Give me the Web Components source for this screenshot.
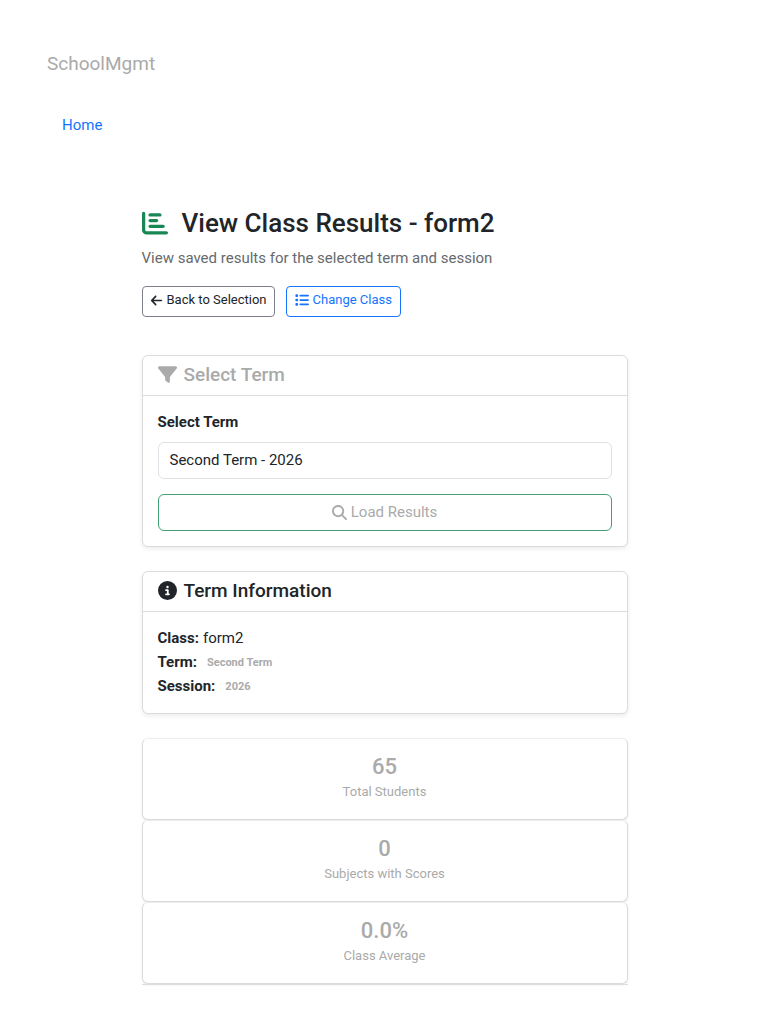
<!DOCTYPE html>
<html lang="en">
<head>
<meta charset="utf-8">
<meta name="viewport" content="width=device-width, initial-scale=1">
<title>View Class Results - form2</title>
<style>
  body { margin: 0; background: #fff; color: #212529; font: 15px/24px Roboto, "Liberation Sans", sans-serif; }
</style>
</head>
<body>
<results-page></results-page>

<template id="t-page">
  <style>
    :host { display: block; padding: 48px 46px 36px 47px; }
    main { display: block; max-width: 486px; margin: 0 auto; padding-top: 69px; }
    .stack { display: grid; gap: 24px; margin-top: 38px; }
    form { display: grid; margin: 0; }
    label { font-weight: 700; margin-bottom: 8px; }
    select { appearance: none; box-sizing: border-box; width: 100%; height: 37px; margin: 0 0 15px; padding: 0 11px 2px; border: 1px solid #dee2e6; border-radius: 6px; background: #fff; color: #212529; font: inherit; }
    .info { margin: 0; }
    .info div { display: flex; gap: 4px; height: 24px; }
    .info div + div { gap: 10px; }
    dt { font-weight: 700; }
    dd { margin: 0; }
    .badge { color: #aaa; font-size: 11px; font-weight: 700; line-height: 26px; }
    .stats::after { content: ""; display: block; border-top: 1px solid #dedede; }
  </style>
  <site-nav></site-nav>
  <main>
    <page-heading></page-heading>
    <div class="stack">
      <ui-card muted>
        <ui-icon slot="icon" name="filter" size="19"></ui-icon>
        <span slot="title">Select Term</span>
        <form>
          <label for="term">Select Term</label>
          <select id="term"><option>Second Term - 2026</option></select>
          <ui-button tone="success" block><ui-icon name="search" size="15"></ui-icon> Load Results</ui-button>
        </form>
      </ui-card>
      <ui-card>
        <ui-icon slot="icon" name="info" size="19"></ui-icon>
        <span slot="title">Term Information</span>
        <dl class="info">
          <div><dt>Class:</dt><dd>form2</dd></div>
          <div><dt>Term:</dt><dd class="badge">Second Term</dd></div>
          <div><dt>Session:</dt><dd class="badge">2026</dd></div>
        </dl>
      </ui-card>
      <div class="stats">
        <stat-card><span slot="value">65</span>Total Students</stat-card>
        <stat-card><span slot="value">0</span>Subjects with Scores</stat-card>
        <stat-card><span slot="value">0.0%</span>Class Average</stat-card>
      </div>
    </div>
  </main>
</template>

<template id="t-nav">
  <style>
    :host { display: block; }
    nav { display: grid; gap: 33px; justify-items: start; }
    a { text-decoration: none; }
    .brand { color: #aaa; font-size: 19px; line-height: 32px; }
    .link { color: #1474ff; margin-left: 15px; line-height: 24px; }
  </style>
  <nav>
    <a class="brand" href="#">SchoolMgmt</a>
    <a class="link" href="#">Home</a>
  </nav>
</template>

<template id="t-heading">
  <style>
    :host { display: block; }
    h1 { display: flex; align-items: center; gap: 14px; margin: 0; font-size: 26px; font-weight: 500; line-height: 34px; white-space: nowrap; }
    h1 ui-icon { color: #198754; }
    p { margin: 6px 0 16px; color: #666a6e; }
    .actions { display: flex; flex-wrap: wrap; gap: 11px; }
  </style>
  <h1><ui-icon name="chart" size="26"></ui-icon>View Class Results - form2</h1>
  <p>View saved results for the selected term and session</p>
  <div class="actions">
    <ui-button tone="dark"><ui-icon name="back" size="13"></ui-icon> Back to Selection</ui-button>
    <ui-button tone="primary"><ui-icon name="list" size="14"></ui-icon> Change Class</ui-button>
  </div>
</template>

<template id="t-button">
  <style>
    :host { display: inline-block; }
    button { display: flex; align-items: center; justify-content: center; gap: 4px; box-sizing: border-box; width: 100%; height: 31px; margin: 0; padding: 0 7px 3px; border: 1px solid #7c8187; border-radius: 4px; background: #fff; color: #212529; font: inherit; font-size: 13px; white-space: nowrap; }
    :host([tone="primary"]) button { border-color: #1474ff; color: #1474ff; padding: 0 8px 3px; }
    :host([block]) { display: block; }
    :host([block]) button { height: 37px; padding-bottom: 1px; border-color: #41a076; border-radius: 6px; color: #aaa; font-size: 15px; }
  </style>
  <button type="button"><slot></slot></button>
</template>

<template id="t-card">
  <style>
    :host { display: block; border: 1px solid #dcdcdc; border-radius: 6px; background: #fff; box-shadow: 0 2px 4px rgba(0,0,0,.08); }
    h2 { display: flex; align-items: center; gap: 7px; box-sizing: border-box; height: 40px; margin: 0; padding: 0 15px 2px; border-bottom: 1px solid #dedede; font-size: 19px; font-weight: 500; line-height: 24px; }
    :host([muted]) h2 { color: #aaa; }
    .body { padding: 14px 15px 15px; }
  </style>
  <h2><slot name="icon"></slot><slot name="title"></slot></h2>
  <div class="body"><slot></slot></div>
</template>

<template id="t-stat">
  <style>
    :host { display: block; box-sizing: border-box; height: 82px; padding-top: 15px; border: 1px solid #dcdcdc; border-top-color: #eee; border-radius: 6px; background: #fff; box-shadow: 0 1px 3px rgba(0,0,0,.08); color: #aaa; text-align: center; }
    .value { font-size: 22px; font-weight: 500; line-height: 26px; }
    .label { font-size: 13px; line-height: 24px; }
  </style>
  <div class="value"><slot name="value"></slot></div>
  <div class="label"><slot></slot></div>
</template>

<script>
  const ICONS = {
    chart: ["0 0 512 512", "M32 32c17.700 0 32 14.300 32 32v336c0 8.800 7.200 16 16 16h400c17.700 0 32 14.300 32 32s-14.300 32-32 32H80c-44.200 0-80-35.800-80-80V64c0-17.700 14.300-32 32-32zm96 64c0-17.700 14.300-32 32-32h192c17.700 0 32 14.300 32 32s-14.300 32-32 32H160c-17.700 0-32-14.300-32-32zm32 80h128c17.700 0 32 14.300 32 32s-14.300 32-32 32H160c-17.700 0-32-14.300-32-32s14.300-32 32-32zm0 112h256c17.700 0 32 14.300 32 32s-14.300 32-32 32H160c-17.700 0-32-14.300-32-32s14.300-32 32-32z"],
    back: ["0 0 448 512", "M9.400 233.400c-12.500 12.500-12.500 32.800 0 45.300l160 160c12.500 12.500 32.800 12.500 45.300 0s12.500-32.800 0-45.300L109.200 288H416c17.700 0 32-14.300 32-32s-14.300-32-32-32H109.300l105.400-105.400c12.500-12.500 12.500-32.800 0-45.300s-32.800-12.500-45.300 0l-160 160z"],
    list: ["0 0 512 512", "M40 48c-13.300 0-24 10.700-24 24v48c0 13.300 10.700 24 24 24h48c13.300 0 24-10.700 24-24V72c0-13.300-10.700-24-24-24H40zm152 16c-17.700 0-32 14.300-32 32s14.300 32 32 32h288c17.700 0 32-14.300 32-32s-14.300-32-32-32H192zm0 160c-17.700 0-32 14.300-32 32s14.300 32 32 32h288c17.700 0 32-14.300 32-32s-14.300-32-32-32H192zm0 160c-17.700 0-32 14.300-32 32s14.300 32 32 32h288c17.700 0 32-14.300 32-32s-14.300-32-32-32H192zM16 232v48c0 13.300 10.700 24 24 24h48c13.300 0 24-10.700 24-24v-48c0-13.300-10.700-24-24-24H40c-13.300 0-24 10.700-24 24zm24 136c-13.300 0-24 10.700-24 24v48c0 13.300 10.700 24 24 24h48c13.300 0 24-10.700 24-24v-48c0-13.300-10.700-24-24-24H40z"],
    filter: ["0 0 512 512", "M3.900 54.900C10.500 40.900 24.500 32 40 32h432c15.500 0 29.500 8.900 36.100 22.900s4.600 30.500-5.200 42.500L320 320.900V448c0 12.100-6.800 23.200-17.700 28.600s-23.800 4.300-33.500-3l-64-48c-8.100-6-12.800-15.500-12.800-25.600v-79.100L9 97.300C-.700 85.400-2.800 68.800 3.900 54.900z"],
    search: ["0 0 512 512", "M416 208c0 45.900-14.900 88.300-40 122.700l126.600 126.700c12.500 12.500 12.500 32.800 0 45.300s-32.800 12.500-45.300 0L330.700 376c-34.400 25.200-76.800 40-122.700 40C93.100 416 0 322.900 0 208S93.100 0 208 0s208 93.100 208 208zM208 352a144 144 0 1 0 0-288 144 144 0 1 0 0 288z"],
    info: ["0 0 512 512", "M256 512a256 256 0 1 0 0-512 256 256 0 1 0 0 512zM216 336h24v-64h-24c-13.300 0-24-10.700-24-24s10.700-24 24-24h48c13.300 0 24 10.700 24 24v88h8c13.300 0 24 10.700 24 24s-10.700 24-24 24h-80c-13.300 0-24-10.700-24-24s10.700-24 24-24zm40-208a32 32 0 1 1 0 64 32 32 0 1 1 0-64z"]
  };

  class TemplateElement extends HTMLElement {
    constructor() {
      super();
      const source = document.getElementById(this.constructor.template);
      this.attachShadow({ mode: "open" }).append(source.content.cloneNode(true));
    }
  }
  class UiIcon extends HTMLElement {
    connectedCallback() {
      if (this.shadowRoot) return;
      const [box, path] = ICONS[this.getAttribute("name")];
      const size = this.getAttribute("size");
      this.attachShadow({ mode: "open" }).innerHTML =
        `<style>:host{display:inline-flex;flex:none}svg{display:block;fill:currentColor}</style>
         <svg width="${size}" height="${size}" viewBox="${box}" aria-hidden="true"><path d="${path}"/></svg>`;
    }
  }
  customElements.define("ui-icon", UiIcon);
  customElements.define("ui-button", class extends TemplateElement { static template = "t-button"; });
  customElements.define("ui-card", class extends TemplateElement { static template = "t-card"; });
  customElements.define("stat-card", class extends TemplateElement { static template = "t-stat"; });
  customElements.define("site-nav", class extends TemplateElement { static template = "t-nav"; });
  customElements.define("page-heading", class extends TemplateElement { static template = "t-heading"; });
  customElements.define("results-page", class extends TemplateElement { static template = "t-page"; });
</script>
</body>
</html>
